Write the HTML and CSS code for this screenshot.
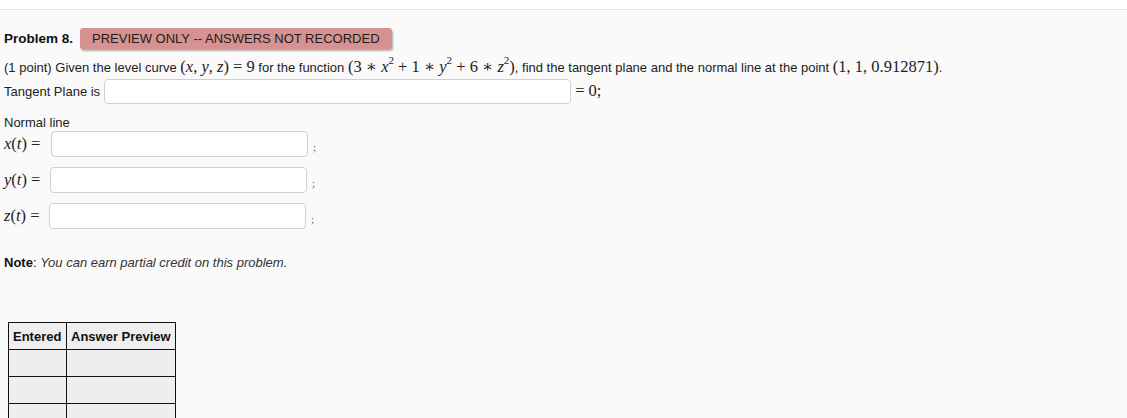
FILE: index.html
```html
<!DOCTYPE html>
<html>
<head>
<meta charset="utf-8">
<link rel="stylesheet" href="styles.css">
</head>
<body>
<div class="topbar"></div>
<div class="problem">
  <div class="header">
    <span class="ptitle">Problem 8.</span>
    <span class="badge">PREVIEW ONLY -- ANSWERS NOT RECORDED</span>
  </div>
  <div class="line1">(1 point) Given the level curve <span class="m">(<i>x</i>, <i>y</i>, <i>z</i>) = 9</span> for the function <span class="m">(3 ∗ <i>x</i><sup>2</sup> + 1 ∗ <i>y</i><sup>2</sup> + 6 ∗ <i>z</i><sup>2</sup>)</span>, find the tangent plane and the normal line at the point <span class="m">(1, 1, 0.912871)</span>.</div>
  <div class="tangent">
    <span>Tangent Plane is</span>
    <span class="inp wide"></span>
    <span class="m eq">= 0;</span>
  </div>
  <div class="nl">Normal line</div>
  <div class="row r1"><span class="m lbl"><i>x</i>(<i>t</i>) =</span><span class="inp narrow"></span><span class="semi">;</span></div>
  <div class="row r2"><span class="m lbl"><i>y</i>(<i>t</i>) =</span><span class="inp narrow"></span><span class="semi">;</span></div>
  <div class="row r3"><span class="m lbl"><i>z</i>(<i>t</i>) =</span><span class="inp narrow"></span><span class="semi">;</span></div>
  <div class="note"><b>Note</b>: <i>You can earn partial credit on this problem.</i></div>
  <table class="results">
    <tr><th class="c1">Entered</th><th class="c2">Answer Preview</th></tr>
    <tr><td class="c1"></td><td class="c2"></td></tr>
    <tr><td class="c1"></td><td class="c2"></td></tr>
    <tr><td class="c1"></td><td class="c2"></td></tr>
  </table>
</div>
</body>
</html>
```
FILE: styles.css
```css
html, body { margin: 0; padding: 0; }
body {
  background: #fafafa;
  font-family: "Liberation Sans", Arial, sans-serif;
  font-size: 13px;
  color: #222;
  height: 418px;
  overflow: hidden;
}
.topbar {
  height: 9px;
  background: #ffffff;
  border-bottom: 1px solid #e4e4e4;
}
.problem { padding-left: 4px; }
.header {
  display: flex;
  align-items: center;
  margin-top: 17px;
  height: 22px;
}
.ptitle {
  font-weight: bold;
  font-size: 13.5px;
  color: #111;
}
.badge {
  margin-left: 7px;
  background: #d69291;
  color: #1c1c1c;
  font-size: 13px;
  height: 21px;
  line-height: 21px;
  padding: 0 12px;
  border-radius: 3px;
  box-shadow: 1px 2px 2px rgba(0,0,0,0.3);
}
.m {
  font-family: "Liberation Serif", "DejaVu Serif", serif;
  font-size: 16.5px;
  color: #222;
}
.m i { font-style: italic; }
.m sup { font-size: 11px; line-height: 0; position: relative; top: -2px; }
.line1 {
  margin-top: 9px;
  height: 18px;
  line-height: 18px;
}
.tangent {
  display: flex;
  align-items: center;
  height: 24px;
  margin-top: 3px;
}
.inp {
  display: block;
  background: #fff;
  border: 1px solid #cfcfcf;
  border-radius: 4px;
  box-sizing: border-box;
}
.wide { width: 467px; height: 25px; margin-left: 4px; }
.eq { margin-left: 4px; }
.nl { margin-top: 12px; height: 15px; line-height: 15px; }
.row {
  display: flex;
  align-items: center;
  height: 26px;
}
.r1 { margin-top: 1px; }
.r2 { margin-top: 10px; }
.r3 { margin-top: 10px; }
.lbl { width: 46px; }
.r1 .lbl { width: 47px; }
.r3 .lbl { width: 45px; }
.narrow { width: 257px; height: 26px; }
.semi {
  font-family: "Liberation Serif", serif;
  font-size: 11px;
  color: #555;
  margin-left: 5px;
  margin-top: 6px;
}
.note { margin-top: 26px; height: 15px; line-height: 15px; color: #111; }
.note b { font-weight: bold; }
.note i { color: #333; }
.results {
  margin-top: 52px;
  margin-left: 4px;
  border-collapse: collapse;
  background: #eeeeee;
  table-layout: fixed;
  width: 167px;
}
.results th, .results td {
  border: 1px solid #111;
  height: 26px;
  padding: 0 4px;
  white-space: nowrap;
  box-sizing: border-box;
}
.results th {
  font-weight: bold;
  font-size: 13px;
  color: #111;
  text-align: left;
}
.results tr { height: 27px; }
.results .c1 { width: 58px; }
.results .c2 { width: 109px; }
```
